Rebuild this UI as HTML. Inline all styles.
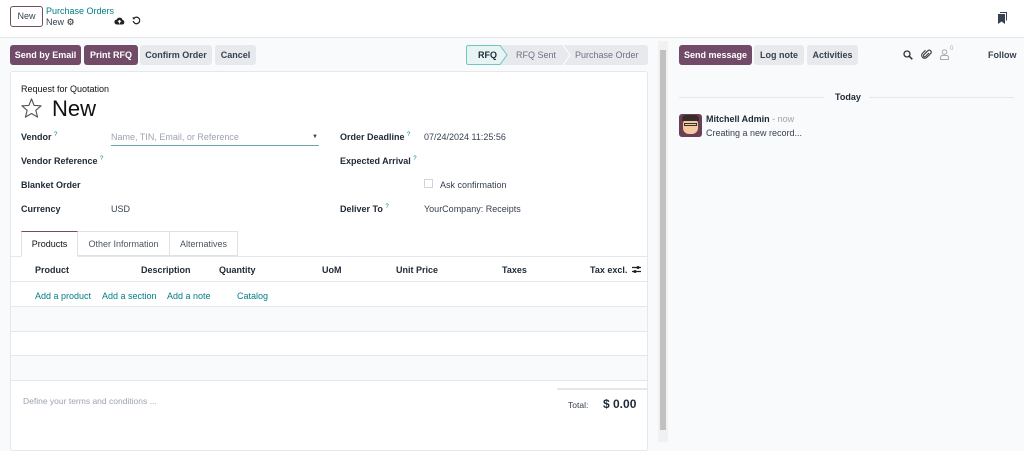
<!DOCTYPE html>
<html><head><meta charset="utf-8"><style>
*{box-sizing:border-box;margin:0;padding:0}
body{width:1024px;height:442px;overflow:hidden;font-family:"Liberation Sans",sans-serif;font-size:9px;color:#374151;background:#f9fafb;position:relative}
.a{position:absolute;white-space:nowrap}
.b{font-weight:bold;color:#1f2937}
.btn{position:absolute;top:45px;height:20px;line-height:20px;font-weight:bold;font-size:9px;text-align:center;border-radius:3px}
.p{background:#714b67;color:#fff}
.g{background:#e7e9ed;color:#374151}
.q{font-size:6px;color:#017e84;vertical-align:top;font-weight:normal}
.t{color:#017e84}
.row{position:absolute;left:11px;width:636px;border-bottom:1px solid #e5e7eb}
</style></head><body>
<div class="a" style="left:0;top:0;width:1024px;height:38px;background:#fff;border-bottom:1px solid #e5e7eb"></div>
<div class="a" style="left:10px;top:6px;width:33px;height:21px;border:1px solid #714b67;border-radius:3px;background:#fff;text-align:center;line-height:19px;color:#374151">New</div>
<div class="a t" style="left:46px;top:6px;font-size:9px">Purchase Orders</div>
<div class="a" style="left:46px;top:17px;font-size:9px;color:#374151">New <span style="font-size:9px;color:#222">⚙</span></div>
<svg class="a" style="left:114px;top:16px" width="11" height="9" viewBox="0 0 11 9"><path d="M3 8.5H8.5A2.3 2.3 0 0 0 8.5 4A3 3 0 0 0 2.8 3.5A2.5 2.5 0 0 0 3 8.5Z" fill="#222"/><path d="M5.5 7.5V4.5M4 6L5.5 4.5L7 6" stroke="#fff" stroke-width="1" fill="none"/></svg>
<svg class="a" style="left:132px;top:16px" width="9" height="9" viewBox="0 0 9 9"><path d="M2 2.2A3.3 3.3 0 1 1 1.2 5" stroke="#222" stroke-width="1.2" fill="none"/><path d="M0.8 0.8V3.3H3.3Z" fill="#222"/></svg>
<svg class="a" style="left:998px;top:12px" width="9" height="12" viewBox="0 0 9 12"><path d="M2 0H9V9L8 8V1H2Z" fill="#374151"/><path d="M0 2H7V12L3.5 9.5L0 12Z" fill="#374151"/></svg>

<div class="btn p" style="left:10px;width:71px">Send by Email</div>
<div class="btn p" style="left:84px;width:54px">Print RFQ</div>
<div class="btn g" style="left:140px;width:72px">Confirm Order</div>
<div class="btn g" style="left:215px;width:41px">Cancel</div>
<div class="a" style="left:466px;top:45px;width:182px;height:20px;background:#e7e9ed;border-radius:3px"></div>
<svg class="a" style="left:466px;top:45px" width="182" height="20"><path d="M0.5 2.5Q0.5 0.5 2.5 0.5H34L41 10L34 19.5H2.5Q0.5 19.5 0.5 17.5Z" fill="#e6f4f4" stroke="#71c5c4"/><path d="M97 0L104 10L97 20" stroke="#fff" fill="none"/></svg>
<div class="a b" style="left:478px;top:50px">RFQ</div>
<div class="a" style="left:516px;top:50px;color:#6b7280">RFQ Sent</div>
<div class="a" style="left:575px;top:50px;color:#6b7280">Purchase Order</div>

<div class="a" style="left:10px;top:71px;width:638px;height:380px;background:#fff;border:1px solid #e5e7eb;border-radius:3px"></div>
<div class="a b" style="left:21px;top:84px;font-weight:normal;color:#111">Request for Quotation</div>
<svg class="a" style="left:21px;top:98px" width="21" height="20" viewBox="0 0 24 23"><path d="M12 1L15 8.5L23 9L17 14.2L19 22L12 17.8L5 22L7 14.2L1 9L9 8.5Z" fill="none" stroke="#555" stroke-width="1.3" stroke-linejoin="round"/></svg>
<div class="a" style="left:52px;top:96px;font-size:22px;color:#111">New</div>

<div class="a b" style="left:21px;top:132px">Vendor <span class="q">?</span></div>
<div class="a" style="left:111px;top:132px;color:#9ca3af">Name, TIN, Email, or Reference</div>
<div class="a" style="left:111px;top:145px;width:208px;border-bottom:1px solid #71a5a5"></div>
<div class="a" style="left:312px;top:134px;font-size:6px;color:#374151">▼</div>
<div class="a b" style="left:21px;top:156px">Vendor Reference <span class="q">?</span></div>
<div class="a b" style="left:21px;top:180px">Blanket Order</div>
<div class="a b" style="left:21px;top:204px">Currency</div>
<div class="a" style="left:111px;top:204px">USD</div>
<div class="a b" style="left:340px;top:132px">Order Deadline <span class="q">?</span></div>
<div class="a" style="left:424px;top:132px">07/24/2024 11:25:56</div>
<div class="a b" style="left:340px;top:156px">Expected Arrival <span class="q">?</span></div>
<div class="a" style="left:424px;top:179px;width:9px;height:9px;border:1px solid #d1d5db"></div>
<div class="a" style="left:440px;top:180px">Ask confirmation</div>
<div class="a b" style="left:340px;top:204px">Deliver To <span class="q">?</span></div>
<div class="a" style="left:424px;top:204px">YourCompany: Receipts</div>

<div class="row" style="top:256px;height:1px"></div>
<div class="a" style="left:21px;top:231px;width:57px;height:26px;border:1px solid #dee2e6;border-top:1px solid #714b67;border-bottom:1px solid #fff;background:#fff;text-align:center;line-height:24px;color:#111">Products</div>
<div class="a" style="left:78px;top:231px;width:92px;height:25px;border:1px solid #dee2e6;border-left:0;text-align:center;line-height:24px;color:#4b5563">Other Information</div>
<div class="a" style="left:170px;top:231px;width:68px;height:25px;border:1px solid #dee2e6;border-left:0;text-align:center;line-height:24px;color:#4b5563">Alternatives</div>

<div class="row" style="top:257px;height:25px"></div>
<div class="a b" style="left:35px;top:265px">Product</div>
<div class="a b" style="left:141px;top:265px">Description</div>
<div class="a b" style="left:219px;top:265px">Quantity</div>
<div class="a b" style="left:322px;top:265px">UoM</div>
<div class="a b" style="left:396px;top:265px">Unit Price</div>
<div class="a b" style="left:502px;top:265px">Taxes</div>
<div class="a b" style="left:590px;top:265px">Tax excl.</div>
<svg class="a" style="left:632px;top:265px" width="9" height="9" viewBox="0 0 9 9"><path d="M0 2.5H9M0 6.5H9" stroke="#222" stroke-width="1.2"/><circle cx="6" cy="2.5" r="1.5" fill="#222"/><circle cx="3" cy="6.5" r="1.5" fill="#222"/></svg>
<div class="row" style="top:282px;height:25px"></div>
<div class="a t" style="left:35px;top:291px">Add a product</div>
<div class="a t" style="left:102px;top:291px">Add a section</div>
<div class="a t" style="left:167px;top:291px">Add a note</div>
<div class="a t" style="left:237px;top:291px">Catalog</div>
<div class="row" style="top:307px;height:25px;background:#f9fafb"></div>
<div class="row" style="top:332px;height:24px"></div>
<div class="row" style="top:356px;height:25px;background:#f9fafb"></div>
<div class="a" style="left:23px;top:396px;color:#9ca3af;font-size:8.5px">Define your terms and conditions ...</div>
<div class="a" style="left:557px;top:388px;width:90px;border-top:2px solid #e5e7eb"></div>
<div class="a" style="left:568px;top:400px;font-size:8.5px">Total:</div>
<div class="a b" style="left:603px;top:397px;font-size:12px">$ 0.00</div>

<div class="a" style="left:658px;top:41px;width:10px;height:401px;background:#f1f1f1"></div>
<div class="a" style="left:660px;top:50px;width:6px;height:380px;background:#c1c1c1"></div>

<div class="btn p" style="left:679px;width:73px">Send message</div>
<div class="btn g" style="left:754px;width:50px">Log note</div>
<div class="btn g" style="left:807px;width:51px">Activities</div>
<svg class="a" style="left:903px;top:50px" width="10" height="10" viewBox="0 0 10 10"><circle cx="4" cy="4" r="3" stroke="#333" stroke-width="1.3" fill="none"/><path d="M6.2 6.2L9.3 9.3" stroke="#333" stroke-width="1.5"/></svg>
<svg class="a" style="left:921px;top:49px" width="11" height="11" viewBox="0 0 11 11"><path d="M8 4L4.5 7.5A1.2 1.2 0 0 1 2.8 5.8L7 1.6A2 2 0 0 1 9.8 4.4L5.5 8.7A3 3 0 0 1 1.3 4.5L4.5 1.3" stroke="#444" stroke-width="1.2" fill="none"/></svg>
<svg class="a" style="left:940px;top:49px" width="9" height="11" viewBox="0 0 9 11"><circle cx="4.5" cy="3" r="2.3" stroke="#aaa" fill="none"/><path d="M0.5 10.5V8.5Q0.5 6.5 2.5 6.5H6.5Q8.5 6.5 8.5 8.5V10.5Z" stroke="#aaa" fill="none"/></svg>
<div class="a" style="left:950px;top:46px;font-size:6px;color:#aaa">0</div>
<div class="a b" style="left:988px;top:50px;font-weight:bold;color:#374151">Follow</div>
<div class="a" style="left:679px;top:97px;width:145px;border-top:1px solid #e5e7eb"></div>
<div class="a" style="left:869px;top:97px;width:145px;border-top:1px solid #e5e7eb"></div>
<div class="a b" style="left:835px;top:92px">Today</div>
<div class="a" style="left:679px;top:114px;width:23px;height:23px;border-radius:3px;background:#6b3f55"></div>
<div class="a" style="left:683px;top:118px;width:15px;height:16px;border-radius:6px;background:#f3c9a0"></div>
<div class="a" style="left:682px;top:115px;width:17px;height:6px;background:#3a2a2a;border-radius:4px 4px 0 0"></div>
<div class="a" style="left:684px;top:123px;width:13px;height:3px;border:1px solid #333"></div>
<div class="a b" style="left:706px;top:114px">Mitchell Admin <span style="font-weight:normal;color:#9ca3af">- now</span></div>
<div class="a" style="left:706px;top:128px">Creating a new record...</div>
</body></html>
